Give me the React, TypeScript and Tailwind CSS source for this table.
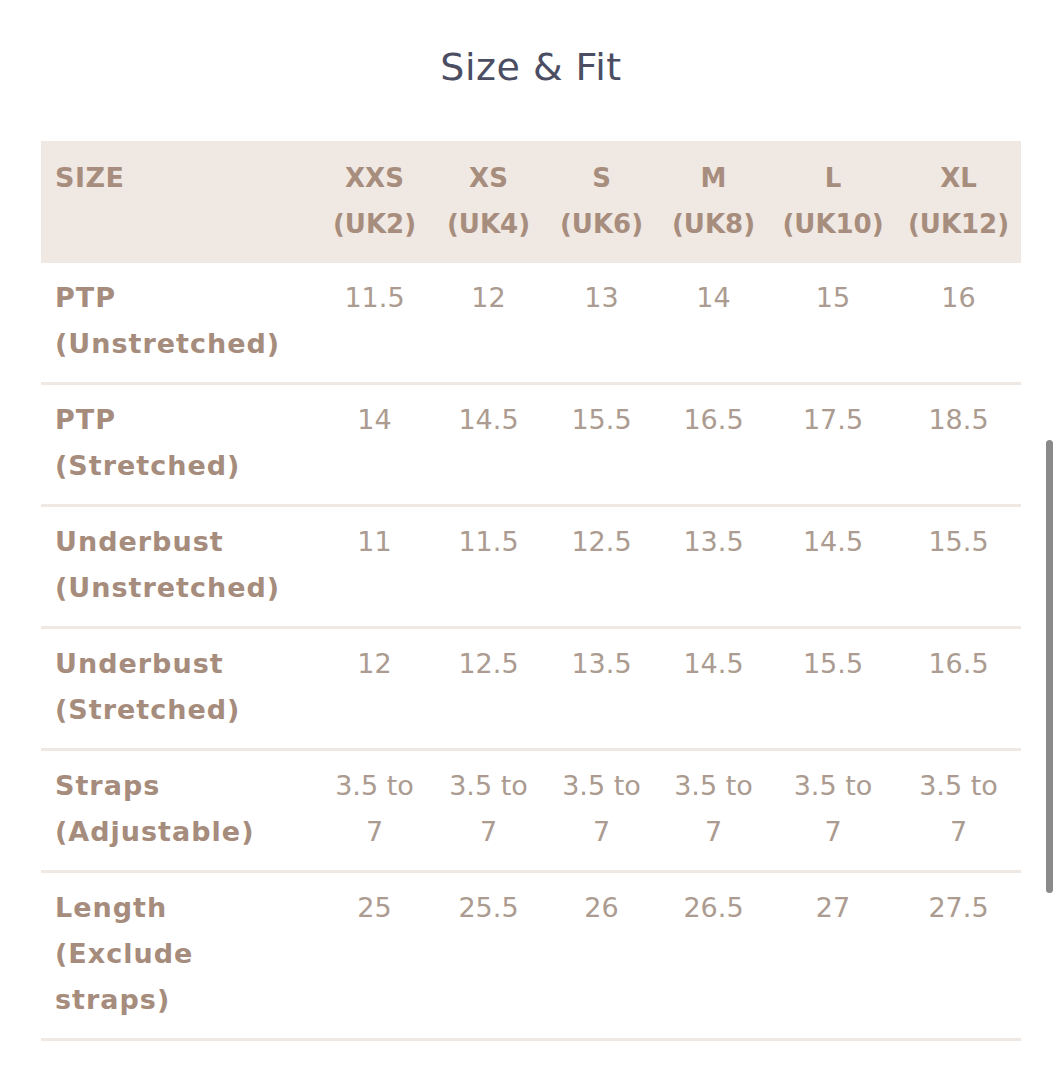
const SIZES = [
  ["XXS", "(UK2)"],
  ["XS", "(UK4)"],
  ["S", "(UK6)"],
  ["M", "(UK8)"],
  ["L", "(UK10)"],
  ["XL", "(UK12)"],
];

const ROWS: { label: string[]; values: string[] }[] = [
  { label: ["PTP", "(Unstretched)"], values: ["11.5", "12", "13", "14", "15", "16"] },
  { label: ["PTP", "(Stretched)"], values: ["14", "14.5", "15.5", "16.5", "17.5", "18.5"] },
  { label: ["Underbust", "(Unstretched)"], values: ["11", "11.5", "12.5", "13.5", "14.5", "15.5"] },
  { label: ["Underbust", "(Stretched)"], values: ["12", "12.5", "13.5", "14.5", "15.5", "16.5"] },
  {
    label: ["Straps", "(Adjustable)"],
    values: ["3.5 to 7", "3.5 to 7", "3.5 to 7", "3.5 to 7", "3.5 to 7", "3.5 to 7"],
  },
  { label: ["Length", "(Exclude", "straps)"], values: ["25", "25.5", "26", "26.5", "27", "27.5"] },
];

// column widths read off the screenshot, first is the label column
const COL_W = ["w-[277px]", "w-[113px]", "w-[115px]", "w-[111px]", "w-[113px]", "w-[126px]", "w-[125px]"];

export default function App() {
  return (
    <div className="relative min-h-[1080px] bg-white font-['DejaVu_Sans',sans-serif]">
      <h2 className="pt-[42px] text-center text-[38px] leading-[50px] font-normal tracking-[0.5px] text-[#4b4e62]">
        Size &amp; Fit
      </h2>

      <div className="mx-[41px] mt-[49px]">
        <table className="w-[980px] table-fixed border-collapse text-[27px] leading-[46px]">
          <thead>
            <tr className="bg-[#f0e8e2] text-[#a78d7d] font-bold">
              <th className={`${COL_W[0]} pl-[14px] pt-[14px] pb-[16px] text-left align-top font-bold tracking-[0.5px]`}>
                SIZE
              </th>
              {SIZES.map(([s, uk], i) => (
                <th
                  key={s}
                  className={`${COL_W[i + 1]} pt-[14px] pb-[16px] text-center align-top text-[26px] font-bold`}
                >
                  <div>{s}</div>
                  <div>{uk}</div>
                </th>
              ))}
            </tr>
          </thead>
          <tbody>
            {ROWS.map((row) => (
              <tr key={row.label.join(" ")} className="border-b-[3px] border-[#efe8e3]">
                <td className="pl-[14px] pt-[12px] pb-[15px] align-top font-bold tracking-[1px] text-[#a68c7c]">
                  {row.label.map((l) => (
                    <div key={l}>{l}</div>
                  ))}
                </td>
                {row.values.map((v, i) => (
                  <td key={i} className="pt-[12px] pb-[15px] text-center align-top font-normal text-[#ab9b90]">
                    <span className="inline-block max-w-[96px]">{v}</span>
                  </td>
                ))}
              </tr>
            ))}
          </tbody>
        </table>
      </div>

      {/* overlay scrollbar */}
      <div className="absolute left-[1046px] top-[440px] h-[453px] w-[7px] rounded-full bg-[#8a8a8a]" />
    </div>
  );
}
